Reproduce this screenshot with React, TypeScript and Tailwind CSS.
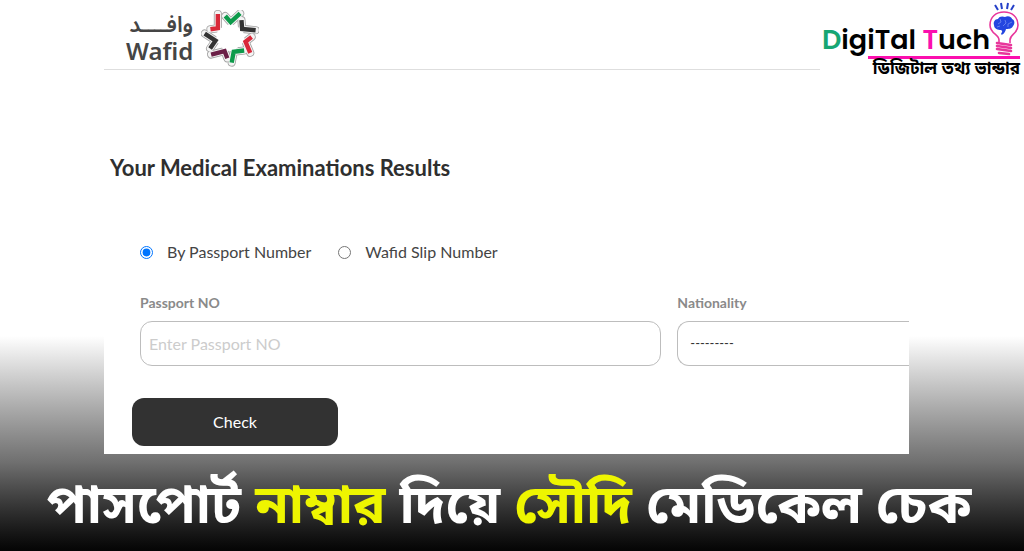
import type { ReactNode } from "react";

function WafidStar() {
  const arms = [
    { d: "M76 34 L92 52 L120 26", color: "#0d9a4b" },
    { d: "M124 46 L126 72 L166 76", color: "#333333" },
    { d: "M154 96 L136 110 L150 143", color: "#d9293a" },
    { d: "M132 136 L101 140 L95 172", color: "#0d9a4b" },
    { d: "M82 159 L74 138 L34 148", color: "#6b1f47" },
    { d: "M31 130 L47 107 L15 86", color: "#333333" },
    { d: "M32 73 L54 70 L54 28", color: "#d9293a" },
  ];
  return (
    <svg viewBox="4 16 172 172" className="h-[58px] w-[58px]" aria-hidden="true">
      <g fill="none" strokeLinejoin="round" strokeLinecap="round">
        {arms.map((a) => (
          <path key={a.d} d={a.d} stroke="#a3a3a3" strokeWidth="24" />
        ))}
        {arms.map((a) => (
          <path key={a.d} d={a.d} stroke="#f4f4f4" strokeWidth="19" />
        ))}
      </g>
      <path
        d="M54 74 L92 56 L128 74 L134 108 L100 138 L74 136 L48 106 Z"
        fill="white"
      />
      <g fill="none" strokeLinejoin="miter">
        {arms.map((a) => (
          <path key={a.d} d={a.d} stroke={a.color} strokeWidth="13" />
        ))}
      </g>
    </svg>
  );
}

function BulbIcon() {
  return (
    <svg viewBox="0 0 32 56" className="h-14 w-8" aria-hidden="true">
      <g stroke="#2540c8" strokeWidth="2" fill="none">
        <path d="M7 5 L10 10 M13 3 L14 9 M20 3 L19 9 M26 5 L23 10" />
      </g>
      <path
        d="M11 43 V40 C11 34 2 34 2 25 C2 17 8 12 16 12 C24 12 30 17 30 25 C30 34 22 34 22 40 V43"
        fill="white"
        stroke="#e8369b"
        strokeWidth="1.6"
      />
      <path
        d="M6 25 C5 22 7 19 10 19 C11 16 15 16 17 17 C20 15 24 17 24 19 C27 20 27 24 25 26 C24 29 20 29 18 29 C17 33 14 36 13 34 C14 32 15 31 13 30 C10 30 6 29 6 25 Z"
        fill="#2446e0"
      />
      <path
        d="M10 24 L13 22 L12 19 M15 26 L18 23 L17 20 M20 27 L20 24 L24 22 M9 27 L12 26"
        fill="none"
        stroke="#8fa3f5"
        strokeWidth="0.6"
      />
      <path
        d="M9 43 L23 45 M9 46 L23 48 M9 49 L23 51 M11 53 L21 54"
        stroke="#e8369b"
        strokeWidth="2.6"
        strokeLinecap="round"
      />
    </svg>
  );
}

function ChannelBadge() {
  return (
    <div className="absolute top-0 right-0 w-[204px] bg-white pr-1 pb-1 pl-0.5">
      <div className="flex h-14 items-end justify-between">
        <p className="font-['Poppins','Inter',sans-serif] text-[27px] leading-8 font-semibold whitespace-nowrap text-black">
          <span className="text-[#17a673]">D</span>igiTal{" "}
          <span className="text-[#fb0fae]">T</span>uch
        </p>
        <div className="-ml-2 shrink-0">
          <BulbIcon />
        </div>
      </div>
      <div className="ml-auto h-[3px] w-[152px] bg-[#fb0fae]" />
      <p className="pt-px text-right font-['Noto_Sans_Bengali','Noto_Sans',sans-serif] text-[17px] leading-5 font-bold whitespace-nowrap text-black">
        ডিজিটাল তথ্য ভান্ডার
      </p>
    </div>
  );
}

function SearchMode({ label, checked }: { label: string; checked?: boolean }) {
  return (
    <label className="flex items-center gap-3.5">
      <input
        type="radio"
        name="mode"
        defaultChecked={checked}
        className="size-[13px] accent-[#0075ff]"
      />
      {label}
    </label>
  );
}

function Field({ id, label, children }: { id: string; label: string; children: ReactNode }) {
  return (
    <div className="flex min-w-0 flex-col gap-2">
      <label htmlFor={id} className="text-sm leading-5 font-bold text-[#8a8a8a]">
        {label}
      </label>
      {children}
    </div>
  );
}

export default function App() {
  return (
    <div className="relative flex min-h-screen flex-col bg-linear-to-b from-white from-61% via-[#6f6f6f] via-84% to-[#050505] font-['Lato',sans-serif]">
      <main className="mr-[115px] ml-[104px] bg-white pb-2">
        <header className="flex h-[70px] items-center gap-2 border-b border-[#dedede] pt-2 pl-[22px] text-[#454545]">
          <div className="flex flex-col">
            <span lang="ar" dir="rtl" className="font-['Noto_Sans_Arabic','DejaVu_Sans',sans-serif] text-[22px] leading-6 font-semibold">
              وافــــد
            </span>
            <span className="font-['Noto_Sans',sans-serif] text-2xl leading-7 font-semibold">Wafid</span>
          </div>
          <WafidStar />
        </header>

        <h1 className="mt-[82px] ml-1.5 text-[22px] leading-8 font-bold text-[#2f2f2f]">
          Your Medical Examinations Results
        </h1>

        <form>
          <div className="mt-14 ml-9 flex gap-[27px] text-base leading-6 text-[#444444]">
            <SearchMode label="By Passport Number" checked />
            <SearchMode label="Wafid Slip Number" />
          </div>

          <div className="mt-[29px] ml-9 grid grid-cols-[9fr_4fr] gap-4">
            <Field id="passport" label="Passport NO">
              <input
                id="passport"
                placeholder="Enter Passport NO"
                className="h-[45px] w-full rounded-xl border border-[#bdbdbd] bg-white px-2 text-base text-[#444444] placeholder:text-[#cccccc]"
              />
            </Field>
            <Field id="nationality" label="Nationality">
              <select
                id="nationality"
                className="h-[45px] w-full appearance-none rounded-l-xl border border-r-0 border-[#bdbdbd] bg-white px-3 text-[13px] text-[#333333]"
              >
                <option>---------</option>
              </select>
            </Field>
          </div>

          <button
            type="button"
            className="mt-8 ml-7 block h-12 w-[206px] rounded-xl bg-[#323232] text-base text-white"
          >
            Check
          </button>
        </form>
      </main>

      <ChannelBadge />

      <h2 className="flex flex-1 items-center justify-center pt-3 pr-1.5 font-['Noto_Sans_Bengali','Noto_Sans',sans-serif] text-[54px] leading-[72px] font-bold whitespace-nowrap text-white">
        <span>
          পাসপোর্ট <span className="text-[#eef500]">নাম্বার</span> দিয়ে{" "}
          <span className="text-[#eef500]">সৌদি</span> মেডিকেল চেক
        </span>
      </h2>
    </div>
  );
}
